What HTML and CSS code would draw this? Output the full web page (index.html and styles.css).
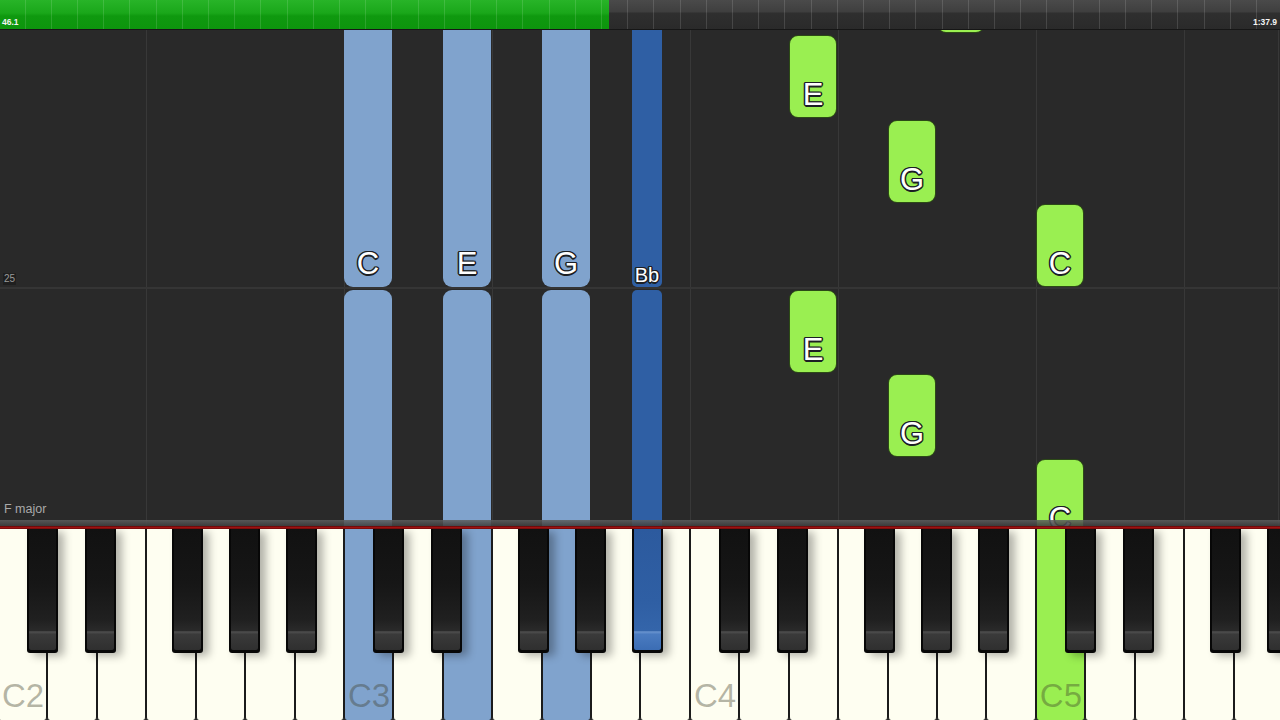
FILE: index.html
```html
<!DOCTYPE html>
<html lang="en">
<head>
<meta charset="utf-8">
<title>Piano roll</title>
<link rel="stylesheet" href="styles.css">
</head>
<body>
<div class="screen">
  <header class="timeline">
    <div class="tl-done"><span class="tl-time">46.1</span></div>
    <div class="tl-rest"><span class="tl-end">1:37.9</span></div>
  </header>

  <main class="roll">
    <div class="measure-line"></div>
    <span class="measure-num">25</span>

    <div class="note blue" style="left:344px;top:-40px;height:297px"><span class="lbl">C</span></div>
    <div class="note blue" style="left:344px;top:260px;height:300px"></div>
    <div class="note blue" style="left:443px;top:-40px;height:297px"><span class="lbl">E</span></div>
    <div class="note blue" style="left:443px;top:260px;height:300px"></div>
    <div class="note blue" style="left:542px;top:-40px;height:297px"><span class="lbl">G</span></div>
    <div class="note blue" style="left:542px;top:260px;height:300px"></div>
    <div class="note dark narrow" style="left:632px;top:-40px;height:297px"><span class="lbl small">Bb</span></div>
    <div class="note dark narrow" style="left:632px;top:260px;height:300px"></div>

    <div class="note green" style="left:937px;top:-80px;height:83px"></div>
    <div class="note green" style="left:789px;top:5px;height:83px"><span class="lbl">E</span></div>
    <div class="note green" style="left:888px;top:89.5px;height:83px"><span class="lbl">G</span></div>
    <div class="note green" style="left:1036px;top:174px;height:83px"><span class="lbl">C</span></div>
    <div class="note green" style="left:789px;top:259.5px;height:83px"><span class="lbl">E</span></div>
    <div class="note green" style="left:888px;top:344px;height:83px"><span class="lbl">G</span></div>
    <div class="note green" style="left:1036px;top:428.5px;height:83px"><span class="lbl">C</span></div>

    <span class="key-sig">F major</span>
    <div class="roll-rail"></div>
  </main>

  <section class="keyboard">
    <div class="kb-red"></div>
    <div class="keys">
      <div class="whites">
        <div class="wk"><span class="klbl">C2</span></div>
        <div class="wk"></div>
        <div class="wk"></div>
        <div class="wk"></div>
        <div class="wk"></div>
        <div class="wk"></div>
        <div class="wk"></div>
        <div class="wk on-blue"><span class="klbl">C3</span></div>
        <div class="wk"></div>
        <div class="wk on-blue"></div>
        <div class="wk"></div>
        <div class="wk on-blue"></div>
        <div class="wk"></div>
        <div class="wk"></div>
        <div class="wk"><span class="klbl">C4</span></div>
        <div class="wk"></div>
        <div class="wk"></div>
        <div class="wk"></div>
        <div class="wk"></div>
        <div class="wk"></div>
        <div class="wk"></div>
        <div class="wk on-green"><span class="klbl">C5</span></div>
        <div class="wk"></div>
        <div class="wk"></div>
        <div class="wk"></div>
        <div class="wk"></div>
      </div>

      <div class="bk" style="left:27px"><div class="bk-face"></div></div>
      <div class="bk" style="left:85px"><div class="bk-face"></div></div>
      <div class="bk" style="left:172px"><div class="bk-face"></div></div>
      <div class="bk" style="left:229px"><div class="bk-face"></div></div>
      <div class="bk" style="left:286px"><div class="bk-face"></div></div>

      <div class="bk" style="left:373px"><div class="bk-face"></div></div>
      <div class="bk" style="left:431px"><div class="bk-face"></div></div>
      <div class="bk" style="left:518px"><div class="bk-face"></div></div>
      <div class="bk" style="left:575px"><div class="bk-face"></div></div>
      <div class="bk bk-on" style="left:632px"><div class="bk-face"></div></div>

      <div class="bk" style="left:719px"><div class="bk-face"></div></div>
      <div class="bk" style="left:777px"><div class="bk-face"></div></div>
      <div class="bk" style="left:864px"><div class="bk-face"></div></div>
      <div class="bk" style="left:921px"><div class="bk-face"></div></div>
      <div class="bk" style="left:978px"><div class="bk-face"></div></div>

      <div class="bk" style="left:1065px"><div class="bk-face"></div></div>
      <div class="bk" style="left:1123px"><div class="bk-face"></div></div>
      <div class="bk" style="left:1210px"><div class="bk-face"></div></div>
      <div class="bk" style="left:1267px"><div class="bk-face"></div></div>
    </div>
  </section>
</div>
</body>
</html>
```

FILE: styles.css
```css
html, body {
  margin: 0;
  padding: 0;
  background: #2a2a2a;
}

.screen {
  width: 1280px;
  height: 720px;
  overflow: hidden;
  display: flex;
  flex-direction: column;
  background: #2a2a2a;
  font-family: "Liberation Sans", Arial, sans-serif;
}

/* ---------- timeline ---------- */
.timeline {
  position: relative;
  flex: 0 0 29px;
  display: flex;
  border-bottom: 1px solid #161616;
}

.timeline::after {
  content: "";
  position: absolute;
  inset: 0;
  pointer-events: none;
  background-image: repeating-linear-gradient(90deg,
    transparent 0, transparent 24.6px,
    rgba(255, 255, 255, 0.13) 24.6px, rgba(255, 255, 255, 0.13) 25.6px,
    transparent 25.6px, transparent 26.2px);
}

.tl-done {
  position: relative;
  flex: 0 0 609px;
  background: linear-gradient(#28b428 0%, #1aa71a 45%, #0f990f 55%, #0d950d 100%);
}

.tl-rest {
  position: relative;
  flex: 1;
  background: linear-gradient(#4a4a4a 0%, #3f3f3f 40%, #2f2f2f 46%, #2a2a2a 100%);
}

.tl-time,
.tl-end {
  position: absolute;
  bottom: 2px;
  z-index: 1;
  color: #f4f4f4;
  font-size: 8.5px;
  font-weight: 700;
  line-height: 10px;
  white-space: nowrap;
}

.tl-time { left: 2px; }
.tl-end { left: 644px; }

/* ---------- note roll ---------- */
.roll {
  position: relative;
  flex: 0 0 496px;
  overflow: hidden;
  background-color: #292929;
  background-image:
    repeating-linear-gradient(90deg, #383838 0, #383838 1px, transparent 1px, transparent 346px),
    repeating-linear-gradient(90deg, #383838 0, #383838 1px, transparent 1px, transparent 346px);
  background-position: -2px 0, 146px 0;
}

.measure-line {
  position: absolute;
  left: 0;
  right: 0;
  top: 257px;
  height: 2px;
  background: #353535;
}

.measure-num {
  position: absolute;
  left: 3px;
  top: 243px;
  padding: 0 1px;
  background: #1f1f1f;
  color: #9a9a9a;
  font-size: 10px;
  line-height: 12px;
}

.key-sig {
  position: absolute;
  left: 4px;
  top: 472px;
  color: #aaaaaa;
  font-size: 12.5px;
  line-height: 14px;
}

.roll-rail {
  position: absolute;
  left: 0;
  right: 0;
  bottom: 0;
  height: 6px;
  background: linear-gradient(rgba(95, 95, 95, 0.85), rgba(62, 62, 62, 0.9));
}

.note {
  position: absolute;
  width: 48px;
  box-sizing: border-box;
  border-radius: 9px;
  display: flex;
  flex-direction: column;
  justify-content: flex-end;
  align-items: center;
  padding-bottom: 8px;
}

.note.narrow {
  width: 30px;
  border-radius: 5px;
  padding-bottom: 2px;
}

.note.blue {
  background: #80a3cd;
}

.note.dark {
  background: #2f5fa4;
}

.note.green {
  background: #9aef51;
  border: 1px solid rgba(25, 45, 12, 0.85);
  padding-bottom: 7px;
}

.lbl {
  color: #ffffff;
  font-size: 31px;
  line-height: 31px;
  text-shadow:
    -1.5px 0 #1c1f24, 1.5px 0 #1c1f24, 0 -1.5px #1c1f24, 0 1.5px #1c1f24,
    -1px -1px #1c1f24, 1px 1px #1c1f24, -1px 1px #1c1f24, 1px -1px #1c1f24;
}

.lbl.small {
  font-size: 20px;
  line-height: 20px;
}

/* ---------- keyboard ---------- */
.keyboard {
  flex: 1;
  display: flex;
  flex-direction: column;
}

.kb-red {
  flex: 0 0 3px;
  background: linear-gradient(#5c0707, #9c1212, #6e0909);
}

.keys {
  position: relative;
  flex: 1;
  overflow: hidden;
}

.whites {
  display: flex;
  height: 100%;
  margin-left: -2px;
}

.wk {
  flex: 0 0 49.43px;
  box-sizing: border-box;
  height: 100%;
  background: #fefef1;
  border-left: 1px solid #1b1b1b;
  border-right: 1px solid #1b1b1b;
  border-radius: 0 0 3px 3px;
  display: flex;
  align-items: flex-end;
  padding: 0 0 8px 3px;
}

.wk.on-blue { background: #80a3cd; }
.wk.on-green { background: #9aef51; }

.klbl {
  color: rgba(60, 60, 40, 0.38);
  font-size: 33px;
  line-height: 33px;
}

.bk {
  position: absolute;
  top: 0;
  width: 31px;
  height: 124px;
  box-sizing: border-box;
  padding: 0 2px 3px;
  background: #070707;
  border-radius: 0 0 3px 3px;
  box-shadow: 6px 3px 8px rgba(0, 0, 0, 0.3);
}

.bk-face {
  height: 100%;
  border-radius: 0 0 2px 2px;
  background: linear-gradient(#111111 0%, #161616 45%, #202020 75%, #2a2a2a 84%,
    #4f4f4f 85%, #3a3a3a 87%, #2f2f2f 100%);
}

.bk.bk-on .bk-face {
  background: linear-gradient(#2c5a9e 0%, #2f5fa4 60%, #3465aa 84%,
    #6a94cf 85%, #4a7bc0 87%, #3b6db4 100%);
}
```
